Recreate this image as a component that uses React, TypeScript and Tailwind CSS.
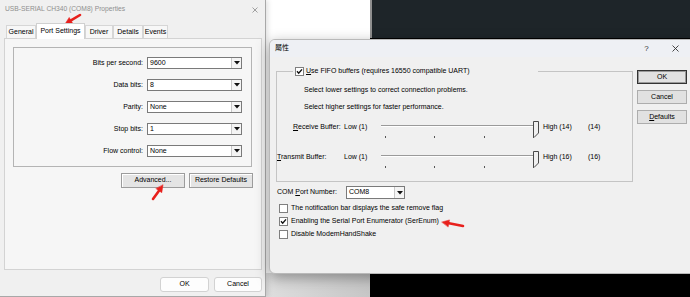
import React from "react";

function Check({ checked }: { checked?: boolean }) {
  return (
    <span className="flex h-[9px] w-[9px] shrink-0 items-center justify-center border border-[#7f7f7f] bg-white">
      {checked && (
        <svg width="7" height="7" viewBox="0 0 7 7">
          <path d="M1 3.3 L2.7 5.2 L6 1.4" stroke="#111" strokeWidth="1.4" fill="none" />
        </svg>
      )}
    </span>
  );
}

function Select({ value, width, height }: { value: string; width: string; height: string }) {
  return (
    <div className={`flex items-stretch border border-[#7a7a7a] bg-white ${width} ${height}`}>
      <span className="flex flex-1 items-center pl-[2px]">{value}</span>
      <span className="flex w-[10px] items-center justify-center border-l border-[#c8c8c8] bg-[#f4f4f4]">
        <svg width="6" height="4" viewBox="0 0 6 4">
          <path d="M0 0 H6 L3 3.5 Z" fill="#111" />
        </svg>
      </span>
    </div>
  );
}

function Slider() {
  return (
    <svg width="158" height="20" viewBox="0 0 158 20" className="shrink-0">
      <line x1="0" y1="4.5" x2="154" y2="4.5" stroke="#9a9a9a" />
      <line x1="0" y1="5.5" x2="154" y2="5.5" stroke="#ffffff" />
      {[4, 53, 103, 152].map((x) => (
        <rect key={x} x={x} y="15" width="1" height="2" fill="#555" />
      ))}
      <path d="M152.5 0.5 H157.5 V12 L153 16.5 L152.5 16.5 Z" fill="#f0f0f0" stroke="#4a4a4a" strokeWidth="1" />
    </svg>
  );
}

function SliderRow({ label, labelPad, high, value }: { label: React.ReactNode; labelPad: string; high: string; value: string }) {
  return (
    <div className="mt-[10px] flex h-[20px] items-start leading-[12px]">
      <span className={`w-[67px] shrink-0 ${labelPad}`}>{label}</span>
      <span className="w-[37px] shrink-0">Low (1)</span>
      <Slider />
      <span className="ml-[4px] w-[45px] shrink-0">{high}</span>
      <span>{value}</span>
    </div>
  );
}

const tabs = [
  { name: "General", w: "w-[30px]" },
  { name: "Port Settings", w: "w-[49px]", active: true },
  { name: "Driver", w: "w-[28px]" },
  { name: "Details", w: "w-[30px]" },
  { name: "Events", w: "w-[25px]" },
];

const portRows = [
  { label: "Bits per second:", value: "9600" },
  { label: "Data bits:", value: "8" },
  { label: "Parity:", value: "None" },
  { label: "Stop bits:", value: "1" },
  { label: "Flow control:", value: "None" },
];

export default function App() {
  return (
    <div className="relative h-[297px] w-[690px] overflow-hidden font-['Liberation_Sans','Noto_Sans_CJK_TC',sans-serif] text-[7px] text-black">
      {/* desktop behind the dialogs */}
      <div className="flex h-full">
        <div className="w-[266px] bg-[#f0f0f0]" />
        <div className="flex w-[104px] flex-col">
          <div className="flex-1 bg-white" />
          <div className="h-[24px] bg-linear-to-r from-[#dedede] to-[#c6c6c6]" />
        </div>
        <div className="flex w-[2px] flex-col">
          <div className="h-[38px] bg-[#8f8f8f]" />
          <div className="flex-1 bg-black" />
        </div>
        <div className="flex flex-1 flex-col">
          <div className="h-[38px] bg-[#1e2529]" />
          <div className="flex-1 bg-black" />
        </div>
      </div>

      {/* USB-SERIAL properties window */}
      <div className="absolute left-0 top-0 flex h-[297px] w-[266px] flex-col border-b border-r border-[#a8a8a8] bg-[#f0f0f0] shadow-[2px_0_5px_rgba(0,0,0,0.12)]">
        <div className="flex h-[19px] shrink-0 items-center justify-between pl-[5px] pr-[7px] text-[6.7px] text-[#8f8f8f]">
          <span>USB-SERIAL CH340 (COM8) Properties</span>
          <svg width="6" height="6" viewBox="0 0 6 6">
            <path d="M0.5 0.5 L5.5 5.5 M5.5 0.5 L0.5 5.5" stroke="#8a8a8a" strokeWidth="0.8" />
          </svg>
        </div>
        <div className="flex h-[19px] shrink-0 items-end pl-[6px]">
          {tabs.map((t) =>
            t.active ? (
              <div
                key={t.name}
                className={`relative z-10 -mb-px flex h-[16px] items-center justify-center border border-b-0 border-[#d0d0d0] bg-white ${t.w}`}
              >
                {t.name}
              </div>
            ) : (
              <div
                key={t.name}
                className={`flex h-[13px] items-center justify-center border border-b-0 border-[#d6d6d6] bg-[#f7f7f7] ${t.w}`}
              >
                {t.name}
              </div>
            )
          )}
        </div>
        <div className="ml-[4px] h-[232px] w-[258px] shrink-0 border border-[#d3d3d3] bg-[#f6f6f6] pl-[8px] pt-[8px]">
          <div className="flex h-[120px] w-[239px] flex-col gap-[10px] border border-[#b4b4b4] pt-[9px]">
            {portRows.map((r) => (
              <div key={r.label} className="flex h-[12px] items-center justify-end gap-[4px] pr-[9px]">
                <span>{r.label}</span>
                <Select value={r.value} width="w-[95px]" height="h-[12px]" />
              </div>
            ))}
          </div>
          <div className="mt-[6px] flex w-[240px] justify-end gap-[4px]">
            <button className="flex h-[15px] w-[64px] items-center justify-center border border-[#9c9c9c] bg-[#e4e4e4] shadow-[inset_1px_1px_0_#fff]">
              Advanced...
            </button>
            <button className="flex h-[15px] w-[64px] items-center justify-center border border-[#9c9c9c] bg-[#e4e4e4] shadow-[inset_1px_1px_0_#fff]">
              Restore Defaults
            </button>
          </div>
        </div>
        <div className="mt-[7px] flex justify-end gap-[5px] pr-[3px]">
          <button className="flex h-[15px] w-[49px] items-center justify-center rounded-[3px] border border-[#d2d2d2] bg-[#fdfdfd]">
            OK
          </button>
          <button className="flex h-[15px] w-[48px] items-center justify-center rounded-[3px] border border-[#d2d2d2] bg-[#fdfdfd]">
            Cancel
          </button>
        </div>
      </div>

      {/* Advanced settings dialog */}
      <div className="absolute left-[269px] top-[39px] flex h-[235px] w-[424px] flex-col overflow-hidden rounded-l-[6px] border border-[#b9b9b9] bg-[#f0f0f0] shadow-[0_4px_14px_rgba(0,0,0,0.35)]">
        <div className="flex h-[17px] shrink-0 items-center bg-[#eef0f4] pl-[5px]">
          <span className="text-[7px]">屬性</span>
          <div className="ml-auto flex pr-[2px] text-[#333]">
            <span className="flex w-[29px] justify-center text-[8px]">?</span>
            <span className="flex w-[29px] items-center justify-center">
              <svg width="7" height="7" viewBox="0 0 7 7">
                <path d="M0.5 0.5 L6.5 6.5 M6.5 0.5 L0.5 6.5" stroke="#333" strokeWidth="0.9" />
              </svg>
            </span>
          </div>
        </div>
        <div className="flex items-start gap-[4px] pl-[6px] pt-[9px]">
          <div className="flex w-[357px] flex-col">
            <fieldset className="w-[357px] border border-[#c4c4c4] pb-[10px]">
              <legend className="ml-[16px] w-[245px] p-0">
                <span className="flex h-[10px] items-center gap-[2px] pl-[2px]">
                  <Check checked />
                  <span>
                    <span className="underline">U</span>se FIFO buffers (requires 16550 compatible UART)
                  </span>
                </span>
              </legend>
              <div className="pl-[27px] pt-[10px] leading-[8px]">
                <p>Select lower settings to correct connection problems.</p>
                <p className="mt-[9px]">Select higher settings for faster performance.</p>
              </div>
              <SliderRow
                label={
                  <>
                    <span className="underline">R</span>eceive Buffer:
                  </>
                }
                labelPad="pl-[16px]"
                high="High (14)"
                value="(14)"
              />
              <SliderRow
                label={
                  <>
                    <span className="underline">T</span>ransmit Buffer:
                  </>
                }
                labelPad="pl-0"
                high="High (16)"
                value="(16)"
              />
            </fieldset>
            <div className="mt-[4px] flex h-[13px] items-center">
              <span className="w-[70px] pl-[1px]">
                COM <span className="underline">P</span>ort Number:
              </span>
              <Select value="COM8" width="w-[59px]" height="h-[13px]" />
            </div>
            <div className="mt-[3px] flex flex-col">
              <label className="flex h-[13px] items-center gap-[3px] pl-[3px]">
                <Check />
                <span>The notification bar displays the safe remove flag</span>
              </label>
              <label className="flex h-[13px] items-center gap-[3px] pl-[3px]">
                <Check checked />
                <span>Enabling the Serial Port Enumerator (SerEnum)</span>
              </label>
              <label className="flex h-[13px] items-center gap-[3px] pl-[3px]">
                <Check />
                <span>Disable ModemHandShake</span>
              </label>
            </div>
          </div>
          <div className="mt-[4px] flex w-[50px] flex-col gap-[6px]">
            <button className="flex h-[14px] items-center justify-center border border-[#333] bg-[#e1e1e1] shadow-[inset_0_0_0_1px_#9a9a9a]">
              OK
            </button>
            <button className="flex h-[14px] items-center justify-center border border-[#adadad] bg-[#e1e1e1]">
              Cancel
            </button>
            <button className="flex h-[14px] items-center justify-center border border-[#adadad] bg-[#e1e1e1]">
              <span>
                <span className="underline">D</span>efaults
              </span>
            </button>
          </div>
        </div>
      </div>

      {/* red annotation arrows */}
      <svg className="pointer-events-none absolute inset-0" width="690" height="297" viewBox="0 0 690 297">
        <g fill="#e8201c" stroke="#e8201c" strokeLinecap="round">
          <line x1="80" y1="15" x2="71" y2="20.4" strokeWidth="2.6" />
          <polygon points="65,24 69.2,17.4 72.8,23.4" strokeWidth="0.5" />
          <line x1="153" y1="199" x2="159" y2="190.7" strokeWidth="2.6" />
          <polygon points="163,185 161.8,192.7 156.1,188.7" strokeWidth="0.5" />
          <line x1="463" y1="226" x2="449" y2="223.3" strokeWidth="2.6" />
          <polygon points="442,222 449.5,219.9 448.2,226.7" strokeWidth="0.5" />
        </g>
      </svg>
    </div>
  );
}
